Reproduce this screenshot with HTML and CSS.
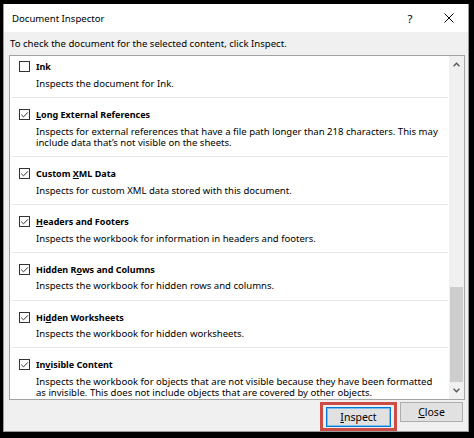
FILE: index.html
```html
<!DOCTYPE html>
<html>
<head>
<meta charset="utf-8">
<link rel="stylesheet" href="styles.css">
</head>
<body>
<div class="dialog">
  <div class="titlebar">
    <span class="title">Document Inspector</span>
    <span class="help">?</span>
    <span class="close-x">
      <svg width="10" height="10" viewBox="0 0 10 10"><path d="M0.5 0.5 L9.5 9.5 M9.5 0.5 L0.5 9.5" stroke="#000" stroke-width="1" fill="none"/></svg>
    </span>
  </div>
  <div class="instr">To check the document for the selected content, click Inspect.</div>
  <div class="listbox">
    <div class="items">
      <div class="items-inner">
        <div class="item">
          <div class="item-head">
            <svg class="cb" width="11" height="11" viewBox="0 0 11 11"><rect x="0.5" y="0.5" width="10" height="10" fill="#fff" stroke="#333"/></svg>
            <span class="item-title">Ink</span>
          </div>
          <div class="item-desc">Inspects the document for Ink.</div>
        </div>
        <div class="item">
          <div class="item-head">
            <svg class="cb" width="11" height="11" viewBox="0 0 11 11"><rect x="0.5" y="0.5" width="10" height="10" fill="#fff" stroke="#333"/><path d="M2.2 5.6 L4.5 7.9 L8.9 3.3" fill="none" stroke="#333" stroke-width="1"/></svg>
            <span class="item-title"><u>L</u>ong External References</span>
          </div>
          <div class="item-desc">Inspects for external references that have a file path longer than 218 characters. This may include data that’s not visible on the sheets.</div>
        </div>
        <div class="item">
          <div class="item-head">
            <svg class="cb" width="11" height="11" viewBox="0 0 11 11"><rect x="0.5" y="0.5" width="10" height="10" fill="#fff" stroke="#333"/><path d="M2.2 5.6 L4.5 7.9 L8.9 3.3" fill="none" stroke="#333" stroke-width="1"/></svg>
            <span class="item-title">Custom <u>X</u>ML Data</span>
          </div>
          <div class="item-desc">Inspects for custom XML data stored with this document.</div>
        </div>
        <div class="item">
          <div class="item-head">
            <svg class="cb" width="11" height="11" viewBox="0 0 11 11"><rect x="0.5" y="0.5" width="10" height="10" fill="#fff" stroke="#333"/><path d="M2.2 5.6 L4.5 7.9 L8.9 3.3" fill="none" stroke="#333" stroke-width="1"/></svg>
            <span class="item-title"><u>H</u>eaders and Footers</span>
          </div>
          <div class="item-desc">Inspects the workbook for information in headers and footers.</div>
        </div>
        <div class="item">
          <div class="item-head">
            <svg class="cb" width="11" height="11" viewBox="0 0 11 11"><rect x="0.5" y="0.5" width="10" height="10" fill="#fff" stroke="#333"/><path d="M2.2 5.6 L4.5 7.9 L8.9 3.3" fill="none" stroke="#333" stroke-width="1"/></svg>
            <span class="item-title">Hidden R<u>o</u>ws and Columns</span>
          </div>
          <div class="item-desc">Inspects the workbook for hidden rows and columns.</div>
        </div>
        <div class="item">
          <div class="item-head">
            <svg class="cb" width="11" height="11" viewBox="0 0 11 11"><rect x="0.5" y="0.5" width="10" height="10" fill="#fff" stroke="#333"/><path d="M2.2 5.6 L4.5 7.9 L8.9 3.3" fill="none" stroke="#333" stroke-width="1"/></svg>
            <span class="item-title">Hi<u>d</u>den Worksheets</span>
          </div>
          <div class="item-desc">Inspects the workbook for hidden worksheets.</div>
        </div>
        <div class="item">
          <div class="item-head">
            <svg class="cb" width="11" height="11" viewBox="0 0 11 11"><rect x="0.5" y="0.5" width="10" height="10" fill="#fff" stroke="#333"/><path d="M2.2 5.6 L4.5 7.9 L8.9 3.3" fill="none" stroke="#333" stroke-width="1"/></svg>
            <span class="item-title">In<u>v</u>isible Content</span>
          </div>
          <div class="item-desc">Inspects the workbook for objects that are not visible because they have been formatted as invisible. This does not include objects that are covered by other objects.</div>
        </div>
      </div>
    </div>
    <div class="scrollbar">
      <div class="sb-btn">
        <svg width="7" height="5" viewBox="0 0 7 5"><path d="M0.6 4.2 L3.5 1.2 L6.4 4.2" fill="none" stroke="#555" stroke-width="1.3"/></svg>
      </div>
      <div class="sb-track">
        <div class="sb-thumb"></div>
      </div>
      <div class="sb-btn">
        <svg width="7" height="5" viewBox="0 0 7 5"><path d="M0.6 0.8 L3.5 3.8 L6.4 0.8" fill="none" stroke="#555" stroke-width="1.3"/></svg>
      </div>
    </div>
  </div>
  <div class="buttons">
    <span class="highlight"><span class="btn btn-default"><u>I</u>nspect</span></span>
    <span class="btn"><u>C</u>lose</span>
  </div>
</div>
</body>
</html>
```

FILE: styles.css
```css
html, body {
  margin: 0;
  padding: 0;
  background: #000;
}
body {
  width: 474px;
  height: 438px;
  overflow: hidden;
  font-family: "Noto Sans", "Open Sans", sans-serif;
  font-size: 9.55px;
  color: #000;
}
.dialog {
  box-sizing: border-box;
  width: 466px;
  height: 428px;
  margin: 4px 0 0 3px;
  border: 1px solid #9a9a9a;
  border-top: none;
  background: #f0f0f0;
  display: flex;
  flex-direction: column;
}
.titlebar {
  height: 28px;
  background: #fff;
  display: flex;
  align-items: center;
  padding-left: 8px;
  flex: none;
}
.title {
  flex: 1;
  font-size: 9.6px;
}
.help {
  width: 30px;
  margin-right: 5px;
  text-align: center;
  font-size: 11.5px;
}
.close-x {
  width: 38px;
  display: flex;
  justify-content: center;
  align-items: center;
}
.instr {
  height: 23px;
  line-height: 23px;
  padding-left: 6px;
  flex: none;
  font-size: 9.6px;
}
.listbox {
  box-sizing: border-box;
  height: 345px;
  margin: 0 3px 0 5px;
  border: 1px solid #a3a3a3;
  background: #fff;
  display: flex;
  flex: none;
}
.items {
  flex: 1;
  overflow: hidden;
}
.items-inner {
  margin-top: -5.8px;
}
.item {
  margin: 0 1px 0 2px;
  padding: 9px 0 7.8px 7px;
  border-bottom: 1px solid #e6e6e6;
}
.item:last-child {
  border-bottom: none;
}
.item-head {
  display: flex;
  align-items: center;
  height: 15px;
  gap: 6px;
}
.cb {
  display: block;
  flex: none;
}
.item-title {
  font-weight: bold;
  font-size: 9px;
  line-height: 15px;
}
.item-desc {
  margin-top: 3.5px;
  padding-left: 17px;
  line-height: 11.5px;
  padding-right: 8px;
}
.scrollbar {
  width: 15px;
  background: #f0f0f0;
  display: flex;
  flex-direction: column;
  flex: none;
}
.sb-btn {
  height: 17px;
  display: flex;
  align-items: center;
  justify-content: center;
  flex: none;
}
.sb-track {
  flex: 1;
  display: flex;
  flex-direction: column;
  justify-content: flex-end;
}
.sb-thumb {
  height: 95px;
  margin: 0 1px;
  background: #cdcdcd;
}
.buttons {
  flex: 1;
  display: flex;
  justify-content: flex-end;
  align-items: flex-start;
  padding: 2px 5px 0 0;
  gap: 3px;
}
.highlight {
  display: flex;
  border: 3px solid #cc4c46;
  padding: 2px 3px 1px 3px;
}
.btn {
  box-sizing: border-box;
  height: 20px;
  width: 63px;
  line-height: 18px;
  text-align: center;
  background: #e1e1e1;
  border: 1px solid #adadad;
  font-size: 10.5px;
}
.btn-default {
  width: 65px;
  border: 1px solid #0078d7;
  box-shadow: inset 0 0 0 1px #7fbcea;
}
```
